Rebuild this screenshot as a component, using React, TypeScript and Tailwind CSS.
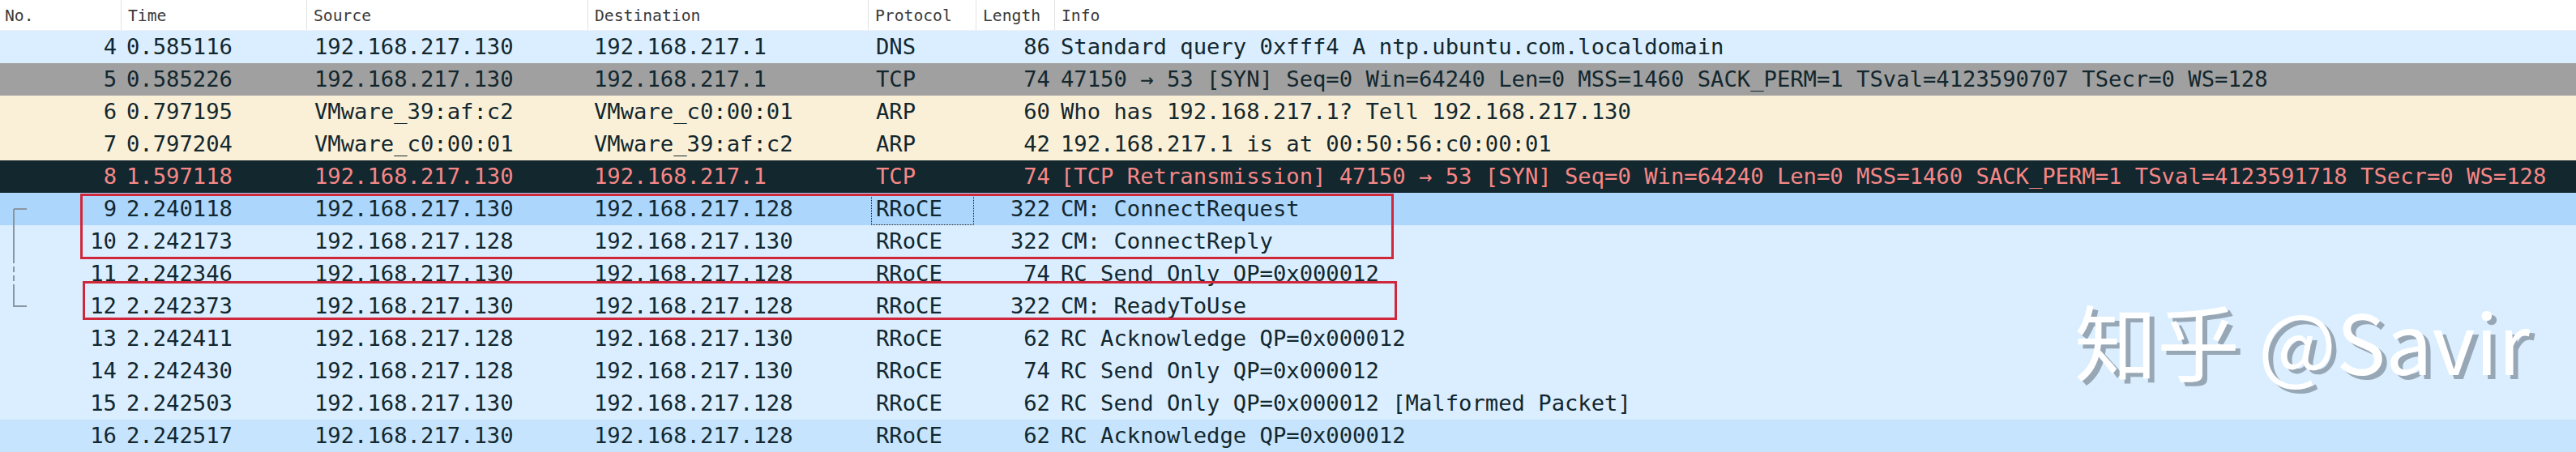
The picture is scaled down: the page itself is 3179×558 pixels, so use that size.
import React from 'react';

type Tone = 'udp' | 'syn' | 'arp' | 'bad' | 'selected' | 'hover';
type Tree = 'first' | 'mid' | 'dash' | 'last';

interface Packet {
  no: number;
  time: string;
  src: string;
  dst: string;
  proto: string;
  len: number;
  info: string;
  tone: Tone;
  tree?: Tree;
}

const packets: Packet[] = [
  { no: 4, time: '0.585116', src: '192.168.217.130', dst: '192.168.217.1', proto: 'DNS', len: 86, info: 'Standard query 0xfff4 A ntp.ubuntu.com.localdomain', tone: 'udp' },
  { no: 5, time: '0.585226', src: '192.168.217.130', dst: '192.168.217.1', proto: 'TCP', len: 74, info: '47150 → 53 [SYN] Seq=0 Win=64240 Len=0 MSS=1460 SACK_PERM=1 TSval=4123590707 TSecr=0 WS=128', tone: 'syn' },
  { no: 6, time: '0.797195', src: 'VMware_39:af:c2', dst: 'VMware_c0:00:01', proto: 'ARP', len: 60, info: 'Who has 192.168.217.1? Tell 192.168.217.130', tone: 'arp' },
  { no: 7, time: '0.797204', src: 'VMware_c0:00:01', dst: 'VMware_39:af:c2', proto: 'ARP', len: 42, info: '192.168.217.1 is at 00:50:56:c0:00:01', tone: 'arp' },
  { no: 8, time: '1.597118', src: '192.168.217.130', dst: '192.168.217.1', proto: 'TCP', len: 74, info: '[TCP Retransmission] 47150 → 53 [SYN] Seq=0 Win=64240 Len=0 MSS=1460 SACK_PERM=1 TSval=4123591718 TSecr=0 WS=128', tone: 'bad' },
  { no: 9, time: '2.240118', src: '192.168.217.130', dst: '192.168.217.128', proto: 'RRoCE', len: 322, info: 'CM: ConnectRequest', tone: 'selected', tree: 'first' },
  { no: 10, time: '2.242173', src: '192.168.217.128', dst: '192.168.217.130', proto: 'RRoCE', len: 322, info: 'CM: ConnectReply', tone: 'udp', tree: 'mid' },
  { no: 11, time: '2.242346', src: '192.168.217.130', dst: '192.168.217.128', proto: 'RRoCE', len: 74, info: 'RC Send Only QP=0x000012', tone: 'udp', tree: 'dash' },
  { no: 12, time: '2.242373', src: '192.168.217.130', dst: '192.168.217.128', proto: 'RRoCE', len: 322, info: 'CM: ReadyToUse', tone: 'udp', tree: 'last' },
  { no: 13, time: '2.242411', src: '192.168.217.128', dst: '192.168.217.130', proto: 'RRoCE', len: 62, info: 'RC Acknowledge QP=0x000012', tone: 'udp' },
  { no: 14, time: '2.242430', src: '192.168.217.128', dst: '192.168.217.130', proto: 'RRoCE', len: 74, info: 'RC Send Only QP=0x000012', tone: 'udp' },
  { no: 15, time: '2.242503', src: '192.168.217.130', dst: '192.168.217.128', proto: 'RRoCE', len: 62, info: 'RC Send Only QP=0x000012 [Malformed Packet]', tone: 'udp' },
  { no: 16, time: '2.242517', src: '192.168.217.130', dst: '192.168.217.128', proto: 'RRoCE', len: 62, info: 'RC Acknowledge QP=0x000012', tone: 'hover' },
];

// Wireshark colouring rules
const toneClass: Record<Tone, string> = {
  udp: 'bg-[#daeeff] text-[#12272e]',
  syn: 'bg-[#a0a0a0] text-[#12272e]',
  arp: 'bg-[#faf0d7] text-[#12272e]',
  bad: 'bg-[#12272e] text-[#f78787]',
  selected: 'bg-[#acd6fc] text-[#12272e]',
  hover: 'bg-[#c6e4fd] text-[#12272e]',
};

const cols = 'grid grid-cols-[150px_229px_347px_346px_133px_97px_1fr]';

const RelatedLine: React.FC<{ kind: Tree }> = ({ kind }) => (
  <svg className="absolute left-0 top-0 h-10 w-10" viewBox="0 0 40 40" fill="none" stroke="#8a96a2" strokeWidth="2">
    {kind === 'first' && <path d="M17 20V40M17 20H33" />}
    {kind === 'mid' && <path d="M17 0V40" />}
    {kind === 'dash' && <path d="M17 0V40" strokeDasharray="7 4" />}
    {kind === 'last' && <path d="M17 0V20H33" />}
  </svg>
);

const headers = ['No.', 'Time', 'Source', 'Destination', 'Protocol', 'Length', 'Info'];

const App: React.FC = () => {
  return (
    <div className="relative h-[558px] w-full overflow-hidden bg-white font-['DejaVu_Sans_Mono',monospace]">
      {/* Column header */}
      <div className={`${cols} h-[38px] bg-white text-[19.7px] leading-none text-[#3a3a3a] border-b border-[#eef2f6]`}>
        {headers.map((h, i) => (
          <div
            key={h}
            className={`flex items-center pt-[3px] whitespace-nowrap ${i === 0 ? 'pl-[6px]' : 'pl-[8px]'} ${i < headers.length - 1 ? 'border-r border-[#e2e2e2]' : ''}`}
          >
            {h}
          </div>
        ))}
      </div>

      {/* Packet list */}
      <div className="flex flex-col">
        {packets.map((p) => (
          <div key={p.no} className={`${cols} h-10 items-center text-[27.2px] leading-none whitespace-pre ${toneClass[p.tone]}`}>
            <div className="relative flex h-10 items-center justify-end pr-[6px]">
              {p.tree && <RelatedLine kind={p.tree} />}
              {p.no}
            </div>
            <div className="pl-[6px]">{p.time}</div>
            <div className="pl-[9px]">{p.src}</div>
            <div className="pl-[7px]">{p.dst}</div>
            {p.tone === 'selected' ? (
              <div className="mx-[3px] flex h-[39px] items-center border border-dotted border-[#222] pl-[5px]">{p.proto}</div>
            ) : (
              <div className="pl-[9px]">{p.proto}</div>
            )}
            <div className="pr-[6px] text-right">{p.len}</div>
            <div className="pl-[7px]">{p.info}</div>
          </div>
        ))}
      </div>

      {/* annotation boxes */}
      <div className="pointer-events-none absolute left-[99px] top-[239px] h-[81px] w-[1621px] border-[3px] border-[#d0283a]" />
      <div className="pointer-events-none absolute left-[102px] top-[347px] h-[48px] w-[1622px] border-[3px] border-[#d0283a]" />

      {/* watermark */}
      <div className="pointer-events-none absolute left-[2560px] top-[368px] whitespace-nowrap font-['Noto_Sans_CJK_SC','Noto_Sans',sans-serif] text-[102px] leading-none text-white [text-shadow:6px_5px_0_#97a7b5]">
        知乎 @Savir
      </div>
    </div>
  );
};

export default App;
